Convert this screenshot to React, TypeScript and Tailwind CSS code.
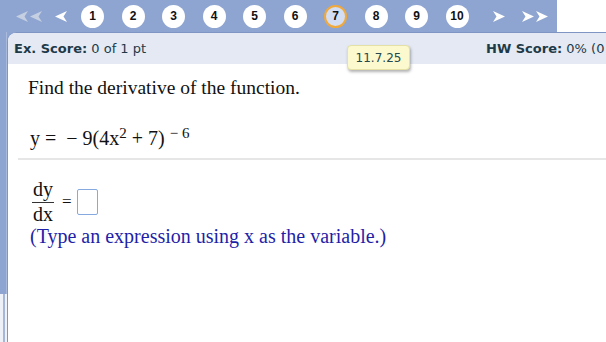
import React from "react";

const NAV_NUMBERS = [1, 2, 3, 4, 5, 6, 7, 8, 9, 10];
const CURRENT = 7;

function Arrow({ color, flip = false }: { color: string; flip?: boolean }) {
  return (
    <svg width="14" height="13" viewBox="0 0 14 13" className={flip ? "-scale-x-100" : ""}>
      <path d="M1 1 L13 6.5 L1 12 L4.5 6.5 Z" fill={color} />
    </svg>
  );
}

function NavBar() {
  return (
    <div className="flex h-[32px]">
      <div className="flex w-[557px] items-center bg-[#8ea5d1] pl-[15px]">
        <div className="flex items-center">
          <Arrow color="#c5cfe2" flip />
          <Arrow color="#c5cfe2" flip />
        </div>
        <div className="ml-[11px] flex items-center">
          <Arrow color="#ffffff" flip />
        </div>
        <div className="ml-[13px] flex items-center gap-[17.5px]">
          {NAV_NUMBERS.map((n) => (
            <div
              key={n}
              className={`flex h-[23px] w-[23px] items-center justify-center rounded-full text-[12px] font-bold text-[#111] ${
                n === CURRENT ? "border-2 border-[#f2a93b] bg-[#d3def4]" : "bg-white"
              }`}
              style={{ fontFamily: "'Liberation Sans', Arial, sans-serif" }}
            >
              {n}
            </div>
          ))}
        </div>
        <div className="ml-[23px] flex items-center">
          <Arrow color="#ffffff" />
        </div>
        <div className="ml-[15px] flex items-center">
          <Arrow color="#ffffff" />
          <Arrow color="#ffffff" />
        </div>
      </div>
      <div className="flex-1 bg-white" />
    </div>
  );
}

export default function App() {
  return (
    <div className="relative h-[342px] w-[606px] overflow-hidden bg-white">
      <NavBar />
      <div className="flex h-[310px] bg-[#8ea5d1]">
        <div className="flex w-[7px] flex-col">
          <div className="h-[262px] border-r border-[#a9badd] bg-[#8ea5d1]" />
          <div className="flex-1 bg-[#eef1f8]">
            <div className="ml-[3px] h-full w-[2px] bg-[#a7b7da]" />
          </div>
        </div>
        <div className="flex-1 overflow-hidden rounded-tl-[9px] border-l border-t border-[#7f96c4] bg-white">
          <div
            className="flex h-[31px] items-center justify-between overflow-hidden bg-[#e4e9f3] pl-[6px] text-[13px] text-[#1e3a48]"
            style={{ fontFamily: "'DejaVu Sans', Verdana, sans-serif" }}
          >
            <div className="whitespace-nowrap">
              <span className="font-bold">Ex. Score:</span> 0 of 1 pt
            </div>
            <div className="w-[120px] shrink-0 overflow-hidden whitespace-nowrap">
              <span className="font-bold">HW Score:</span> 0% (0
            </div>
          </div>
          <div
            className="text-[20px] text-[#111]"
            style={{ fontFamily: "'Liberation Serif', 'Times New Roman', serif" }}
          >
            <p className="ml-[20px] mt-[13px] text-[19.5px] leading-[22px]">Find the derivative of the function.</p>
            <p className="ml-[22px] mt-[27px] whitespace-pre leading-[24px]">
              {"y =  − 9(4x"}
              <sup className="text-[15px]">2</sup>
              {" + 7)"}
              <sup className="ml-[5px] text-[15px]">− 6</sup>
            </p>
            <div className="ml-[10px] mt-[8px] h-[2px] bg-[#e6e6e6]" />
            <div className="ml-[24px] mt-[19px] flex items-center">
              <div className="flex flex-col items-center leading-[20px]">
                <span>dy</span>
                <span className="mb-[1px] mt-[3px] h-[1px] w-[22px] bg-[#333]" />
                <span>dx</span>
              </div>
              <span className="ml-[8px] text-[17px]">=</span>
              <span className="ml-[5px] h-[26px] w-[21px] rounded-[2px] border-[1.5px] border-[#86a9e0] bg-white" />
            </div>
            <p className="ml-[22px] mt-[1px] leading-[22px] text-[#1f1fa8]">
              (Type an expression using x as the variable.)
            </p>
          </div>
        </div>
      </div>
      <div
        className="absolute left-[347px] top-[45px] flex h-[25px] w-[63px] items-center justify-center rounded-[4px] border border-[#e4e0a6] bg-[#fbf9cd] text-[12px] text-[#244850] shadow-[1px_2px_3px_rgba(0,0,0,0.3)]"
        style={{ fontFamily: "'DejaVu Sans', Verdana, sans-serif" }}
      >
        11.7.25
      </div>
    </div>
  );
}
